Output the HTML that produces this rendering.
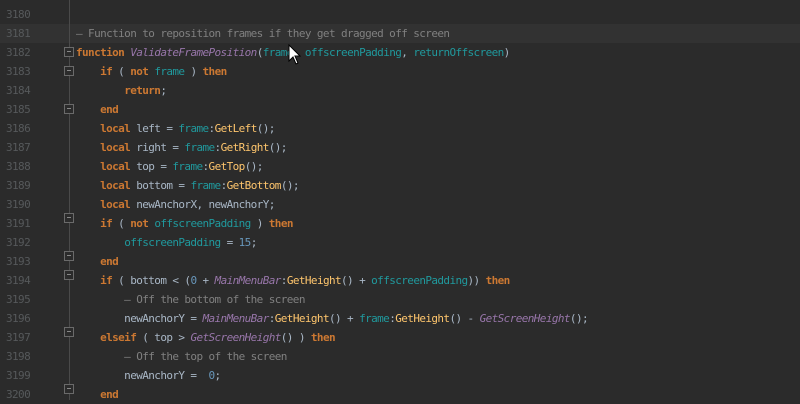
<!DOCTYPE html>
<html><head><meta charset="utf-8"><style>
body{margin:0;width:800px;height:400px;overflow:hidden;background:#2b2b2b;position:relative;font-family:"DejaVu Sans Mono","Liberation Mono",monospace;font-size:11px;letter-spacing:-0.6px}
.ln{position:absolute;left:0;width:56px;text-align:left;padding-left:6px;color:#56595b;height:19px;line-height:19px}
.c{position:absolute;left:76px;white-space:pre;color:#a9b7c6;height:19px;line-height:19px}
.k{color:#cc7832;font-weight:bold}.m{color:#808080}.f{color:#20999d}.y{color:#ffc66d}.p{color:#9876aa;font-style:italic}.n{color:#6897bb}
.fold{position:absolute;left:64px;width:10px;height:10px;border:1px solid #6a6a6a;box-sizing:border-box;background:#2b2b2b}
.fold::after{content:"";position:absolute;left:2px;top:3px;width:4px;height:1px;background:#888}
</style></head><body>
<div style="position:absolute;left:0;top:24px;width:800px;height:19px;background:#323232"></div>
<div style="position:absolute;left:69px;top:0;width:1px;height:400px;background:#4a4a4a"></div>
<div class="fold" style="top:47px"></div>
<div class="fold" style="top:66px"></div>
<div class="fold" style="top:104px"></div>
<div class="fold" style="top:213px"></div>
<div class="fold" style="top:251px"></div>
<div class="fold" style="top:270px"></div>
<div class="fold" style="top:327px"></div>
<div class="fold" style="top:384px"></div>

<div class="ln" style="top:5px">3180</div>
<div class="ln" style="top:24px">3181</div><div class="c m" style="top:24px">— Function to reposition frames if they get dragged off screen</div>
<div class="ln" style="top:43px">3182</div><div class="c" style="top:43px"><span class="k">function</span> <span class="p">ValidateFramePosition</span>(<span class="f">frame</span>, <span class="f">offscreenPadding</span>, <span class="f">returnOffscreen</span>)</div>
<div class="ln" style="top:62px">3183</div><div class="c" style="top:62px">    <span class="k">if</span> ( <span class="k">not</span> <span class="f">frame</span> ) <span class="k">then</span></div>
<div class="ln" style="top:81px">3184</div><div class="c" style="top:81px">        <span class="k">return</span>;</div>
<div class="ln" style="top:100px">3185</div><div class="c" style="top:100px">    <span class="k">end</span></div>
<div class="ln" style="top:119px">3186</div><div class="c" style="top:119px">    <span class="k">local</span> left = <span class="f">frame</span>:<span class="y">GetLeft</span>();</div>
<div class="ln" style="top:138px">3187</div><div class="c" style="top:138px">    <span class="k">local</span> right = <span class="f">frame</span>:<span class="y">GetRight</span>();</div>
<div class="ln" style="top:157px">3188</div><div class="c" style="top:157px">    <span class="k">local</span> top = <span class="f">frame</span>:<span class="y">GetTop</span>();</div>
<div class="ln" style="top:176px">3189</div><div class="c" style="top:176px">    <span class="k">local</span> bottom = <span class="f">frame</span>:<span class="y">GetBottom</span>();</div>
<div class="ln" style="top:195px">3190</div><div class="c" style="top:195px">    <span class="k">local</span> newAnchorX, newAnchorY;</div>
<div class="ln" style="top:214px">3191</div><div class="c" style="top:214px">    <span class="k">if</span> ( <span class="k">not</span> <span class="f">offscreenPadding</span> ) <span class="k">then</span></div>
<div class="ln" style="top:233px">3192</div><div class="c" style="top:233px">        <span class="f">offscreenPadding</span> = <span class="n">15</span>;</div>
<div class="ln" style="top:252px">3193</div><div class="c" style="top:252px">    <span class="k">end</span></div>
<div class="ln" style="top:271px">3194</div><div class="c" style="top:271px">    <span class="k">if</span> ( bottom &lt; (<span class="n">0</span> + <span class="p">MainMenuBar</span>:<span class="y">GetHeight</span>() + <span class="f">offscreenPadding</span>)) <span class="k">then</span></div>
<div class="ln" style="top:290px">3195</div><div class="c m" style="top:290px">        — Off the bottom of the screen</div>
<div class="ln" style="top:309px">3196</div><div class="c" style="top:309px">        newAnchorY = <span class="p">MainMenuBar</span>:<span class="y">GetHeight</span>() + <span class="f">frame</span>:<span class="y">GetHeight</span>() - <span class="p">GetScreenHeight</span>();</div>
<div class="ln" style="top:328px">3197</div><div class="c" style="top:328px">    <span class="k">elseif</span> ( top &gt; <span class="p">GetScreenHeight</span>() ) <span class="k">then</span></div>
<div class="ln" style="top:347px">3198</div><div class="c m" style="top:347px">        — Off the top of the screen</div>
<div class="ln" style="top:366px">3199</div><div class="c" style="top:366px">        newAnchorY =  <span class="n">0</span>;</div>
<div class="ln" style="top:385px">3200</div><div class="c" style="top:385px">    <span class="k">end</span></div>
<svg style="position:absolute;left:288px;top:44px" width="14" height="22" viewBox="0 0 14 22"><path d="M1 1 L1 17 L5 13 L8 20 L10 19 L7 12 L12 12 Z" fill="#fff" stroke="#000" stroke-width="1"/></svg>
</body></html>
